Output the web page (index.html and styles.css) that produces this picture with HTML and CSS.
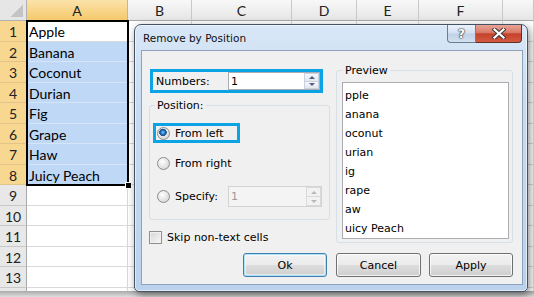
FILE: index.html
```html
<!DOCTYPE html>
<html>
<head>
<meta charset="utf-8">
<link rel="stylesheet" href="styles.css">
</head>
<body>
<div class="sheet">
  <div class="grid">
    <div class="corner"></div><div class="ch sel">A</div><div class="ch">B</div><div class="ch">C</div><div class="ch">D</div><div class="ch">E</div><div class="ch">F</div><div class="ch"></div>
    <div class="rh sel">1</div><div class="c act">Apple</div><div class="c"></div><div class="c"></div><div class="c"></div><div class="c"></div><div class="c"></div><div class="c"></div>
    <div class="rh sel">2</div><div class="c sel">Banana</div><div class="c"></div><div class="c"></div><div class="c"></div><div class="c"></div><div class="c"></div><div class="c"></div>
    <div class="rh sel">3</div><div class="c sel">Coconut</div><div class="c"></div><div class="c"></div><div class="c"></div><div class="c"></div><div class="c"></div><div class="c"></div>
    <div class="rh sel">4</div><div class="c sel">Durian</div><div class="c"></div><div class="c"></div><div class="c"></div><div class="c"></div><div class="c"></div><div class="c"></div>
    <div class="rh sel">5</div><div class="c sel">Fig</div><div class="c"></div><div class="c"></div><div class="c"></div><div class="c"></div><div class="c"></div><div class="c"></div>
    <div class="rh sel">6</div><div class="c sel">Grape</div><div class="c"></div><div class="c"></div><div class="c"></div><div class="c"></div><div class="c"></div><div class="c"></div>
    <div class="rh sel">7</div><div class="c sel">Haw</div><div class="c"></div><div class="c"></div><div class="c"></div><div class="c"></div><div class="c"></div><div class="c"></div>
    <div class="rh sel">8</div><div class="c sel">Juicy Peach</div><div class="c"></div><div class="c"></div><div class="c"></div><div class="c"></div><div class="c"></div><div class="c"></div>
    <div class="rh">9</div><div class="c"></div><div class="c"></div><div class="c"></div><div class="c"></div><div class="c"></div><div class="c"></div><div class="c"></div>
    <div class="rh">10</div><div class="c"></div><div class="c"></div><div class="c"></div><div class="c"></div><div class="c"></div><div class="c"></div><div class="c"></div>
    <div class="rh">11</div><div class="c"></div><div class="c"></div><div class="c"></div><div class="c"></div><div class="c"></div><div class="c"></div><div class="c"></div>
    <div class="rh">12</div><div class="c"></div><div class="c"></div><div class="c"></div><div class="c"></div><div class="c"></div><div class="c"></div><div class="c"></div>
    <div class="rh">13</div><div class="c"></div><div class="c"></div><div class="c"></div><div class="c"></div><div class="c"></div><div class="c"></div><div class="c"></div>
    <div class="rh"></div><div class="c"></div><div class="c"></div><div class="c"></div><div class="c"></div><div class="c"></div><div class="c"></div><div class="c"></div>
  </div>
  <div class="selbox"><span class="handle"></span></div>
</div>
<div class="shade"></div>

<div class="dialog">
  <div class="titlebar">
    <span class="title">Remove by Position</span>
    <div class="caption">
      <span class="help">?</span>
      <span class="close"><svg width="14" height="11" viewBox="0 0 14 11"><path d="M2.5 1.5 L11.5 9.5 M11.5 1.5 L2.5 9.5" stroke="#3a3a3a" stroke-width="4.2" stroke-linecap="square"/><path d="M2.5 1.5 L11.5 9.5 M11.5 1.5 L2.5 9.5" stroke="#fff" stroke-width="2.2" stroke-linecap="square"/></svg></span>
    </div>
  </div>
  <div class="client">
    <div class="top">
      <div class="leftcol">
        <div class="numbers">
          <span class="lbl">Numbers:</span>
          <div class="spin-input"><span class="val">1</span><div class="spin"><span class="sb"><i class="up"></i></span><span class="sb"><i class="down"></i></span></div></div>
        </div>
        <fieldset class="group pos">
          <legend>Position:</legend>
          <div class="opt hl"><span class="radio on"></span><span>From left</span></div>
          <div class="opt"><span class="radio"></span><span>From right</span></div>
          <div class="opt spec"><span class="radio"></span><span class="txt">Specify:</span>
            <div class="spin-input dis"><span class="val">1</span><div class="spin"><span class="sb"><i class="up"></i></span><span class="sb"><i class="down"></i></span></div></div>
          </div>
        </fieldset>
        <div class="check-row"><span class="check"></span><span>Skip non-text cells</span></div>
      </div>
      <fieldset class="group preview">
        <legend>Preview</legend>
        <div class="list">
          <div>pple</div>
          <div>anana</div>
          <div>oconut</div>
          <div>urian</div>
          <div>ig</div>
          <div>rape</div>
          <div>aw</div>
          <div>uicy Peach</div>
        </div>
      </fieldset>
    </div>
    <div class="buttons">
      <button class="btn ok">Ok</button>
      <button class="btn cancel">Cancel</button>
      <button class="btn">Apply</button>
    </div>
  </div>
</div>
</body>
</html>
```

FILE: styles.css
```css
* { box-sizing: border-box; }
html, body { margin: 0; padding: 0; }
body {
  width: 534px;
  height: 297px;
  overflow: hidden;
  position: relative;
  background: #fff;
  font-family: Lato, "Liberation Sans", sans-serif;
}

/* ---------- spreadsheet ---------- */
.sheet { height: 291px; overflow: hidden; position: relative; }
.grid {
  display: grid;
  grid-template-columns: 27px 101px 64px 100px 65px 62px 84px 31px;
  grid-template-rows: 21px;
  grid-auto-rows: 20.5px;
}
.corner {
  background: linear-gradient(135deg, transparent 50%, #c4c4c4 50%) no-repeat right 3px bottom 3px / 12px 12px, #e6e6e6;
  border-right: 1px solid #b0b0b0;
  border-bottom: 1px solid #b0b0b0;
}
.ch {
  background: linear-gradient(#f8f8f8, #e6e6e6);
  border-right: 1px solid #c8c8c8;
  border-bottom: 1px solid #a8a8a8;
  text-align: center;
  font-size: 14px;
  line-height: 21px;
  color: #222;
}
.ch.sel {
  background: linear-gradient(#fbe3aa, #f5c96c);
  border-right-color: #d8b36a;
  border-bottom-color: #e0a445;
}
.rh {
  background: #e8e8e8;
  border-right: 1px solid #a8a8a8;
  border-bottom: 1px solid #c8c8c8;
  text-align: center;
  font-size: 14px;
  line-height: 20px;
  padding-top: 1px;
  color: #222;
}
.rh.sel {
  background: #f8d790;
  border-bottom-color: #e2c38a;
  border-right-color: #e0a445;
}
.c {
  border-right: 1px solid #d9d9d9;
  border-bottom: 1px solid #d9d9d9;
  font-size: 14px;
  line-height: 20px;
  padding: 1px 0 0 2px;
  color: #000;
  white-space: nowrap;
}
.c.sel { background: #bfd8f6; border-bottom-color: #d6e5f8; }
.c.act { background: #fff; }
.selbox {
  position: absolute;
  left: 26px;
  top: 20px;
  width: 103px;
  height: 166px;
  border: 2px solid #000;
}
.handle {
  position: absolute;
  right: -5px;
  bottom: -5px;
  width: 7px;
  height: 7px;
  background: #000;
  border: 1px solid #fff;
}
.shade { height: 6px; background: linear-gradient(#a9a9a9, #dedede); }

/* ---------- dialog ---------- */
.dialog {
  position: absolute;
  left: 134px;
  top: 24px;
  width: 394px;
  height: 268px;
  border: 1px solid #465263;
  border-radius: 7px 7px 5px 5px;
  background: linear-gradient(#d8e7f7, #c7dcf2 30%, #bad2ec);
  box-shadow: 2px 3px 8px rgba(0,0,0,.45), inset 0 0 0 1px rgba(255,255,255,.55);
  display: flex;
  flex-direction: column;
  font-family: "DejaVu Sans", sans-serif;
  font-size: 11px;
  color: #000;
}
.titlebar {
  height: 25px;
  flex: none;
  display: flex;
  justify-content: space-between;
  align-items: flex-start;
  padding-left: 8px;
}
.title { font-size: 10.5px; line-height: 13px; margin-top: 7px; color: #111; }
.caption { display: flex; margin-right: 5px; }
.help, .close {
  height: 18px;
  display: flex;
  align-items: center;
  justify-content: center;
}
.help {
  width: 29px;
  border: 1px solid #6b7b90;
  border-top: none;
  border-radius: 0 0 0 4px;
  background: linear-gradient(#eaf2fa, #d3e1f0 48%, #bfd1e6 52%, #d2e1f0);
  font-weight: bold;
  font-size: 12px;
  color: #fff;
  text-shadow: 0 0 1px #333, 0 0 1px #333, 0 0 2px #333;
}
.close {
  width: 46px;
  border: 1px solid #5d3028;
  border-left: none;
  border-top: none;
  border-radius: 0 0 4px 0;
  background: linear-gradient(#e8a496, #da7a66 45%, #c5412b 52%, #d45a42);
}
.close svg { display: block; }

.client {
  flex: 1;
  margin: 0 4px 6px 6px;
  background: #f0f0f0;
  border: 1px solid #8ea3bb;
  display: flex;
  flex-direction: column;
  padding: 0 9px 0 7px;
}
.top { display: flex; gap: 6px; height: 193px; align-items: flex-start; }
.leftcol { width: 181px; display: flex; flex-direction: column; align-items: flex-start; }

.numbers {
  margin: 18px 0 0 1px;
  width: 173px;
  height: 24px;
  border: 3px solid #0ba3e3;
  display: flex;
  align-items: center;
}
.numbers .lbl { width: 75px; padding-left: 3px; }
.spin-input {
  width: 92px;
  height: 18px;
  border: 1px solid #abadb3;
  background: #fff;
  display: flex;
  justify-content: space-between;
  align-items: center;
  padding-left: 2px;
}
.spin { display: flex; flex-direction: column; width: 15px; height: 16px; }
.sb {
  flex: 1;
  display: flex;
  align-items: center;
  justify-content: center;
  border: 1px solid #c9d2de;
  background: linear-gradient(#f6f8fb, #e3e8ef);
}
.sb + .sb { border-top: none; }
.up, .down { width: 0; height: 0; border-left: 3px solid transparent; border-right: 3px solid transparent; }
.up { border-bottom: 3px solid #4d5f86; }
.down { border-top: 3px solid #4d5f86; }
.spin-input.dis {
  width: 94px;
  height: 21px;
  background: #f4f4f4;
  border-color: #d3d3d3;
  color: #9a9a9a;
}
.spin-input.dis .spin { height: 19px; }
.spin-input.dis .sb { border-color: #dadada; background: #f2f2f2; }
.spin-input.dis .up { border-bottom-color: #b8b8b8; }
.spin-input.dis .down { border-top-color: #b8b8b8; }

fieldset.group {
  margin: 0;
  min-width: 0;
  border: 1px solid #d5dfe5;
  border-radius: 3px;
}
fieldset.group legend { padding: 0 2px; line-height: 13px; }
.pos { margin-top: 6px !important; width: 181px; padding: 11px 0 12px 3px; }
.pos legend { margin-left: 2px; }
.opt { display: flex; align-items: center; height: 20px; padding-left: 4px; }
.opt + .opt { margin-top: 10px; }
.opt.hl { width: 87px; border: 3px solid #0ba3e3; padding-left: 1px; }
.opt.spec { height: 21px; margin-top: 13px; }
.opt .txt { width: 53px; }
.radio {
  flex: none;
  width: 13px;
  height: 13px;
  margin-right: 5px;
  border-radius: 50%;
  border: 1px solid #8c8c8c;
  background: radial-gradient(circle at 40% 35%, #ffffff, #d6d6d6 80%);
}
.radio.on {
  background: radial-gradient(circle at 45% 40%, #8fd0f6 0, #2a86d6 1.6px, #13549c 3px, #3a5e86 3.6px, transparent 4px),
              radial-gradient(circle at 40% 35%, #ffffff, #d6d6d6 80%);
}

.check-row { display: flex; align-items: center; margin-top: 11px; height: 13px; }
.check {
  width: 13px;
  height: 13px;
  margin-right: 5px;
  border: 1px solid #8f8f8f;
  background: linear-gradient(135deg, #d4d4d4, #f8f8f8);
  box-shadow: inset 0 0 0 1px #f2f2f2;
}

.preview { margin-top: 13px !important; width: 177px; padding: 5px 3px 3px 5px; }
.preview legend { margin-left: 1px; }
.list {
  height: 157px;
  border: 1px solid #abadb3;
  background: #fff;
  padding: 3px 0 0 2px;
  line-height: 19px;
}

.buttons { display: flex; justify-content: flex-end; gap: 8px; margin-top: 9px; }
.btn {
  width: 84px;
  height: 24px;
  padding: 0;
  border: 1px solid #707070;
  border-radius: 3px;
  background: linear-gradient(#f2f2f2, #ebebeb 48%, #dddddd 52%, #cfcfcf);
  box-shadow: inset 0 0 0 1px rgba(255,255,255,.75);
  font: inherit;
  color: #000;
}
.btn.ok {
  margin-right: 1px;
  border-color: #3c7fb1;
  box-shadow: inset 0 0 0 1px #aee0f7, inset 0 0 0 2px rgba(255,255,255,.5);
}
.btn.cancel { width: 85px; }
```
